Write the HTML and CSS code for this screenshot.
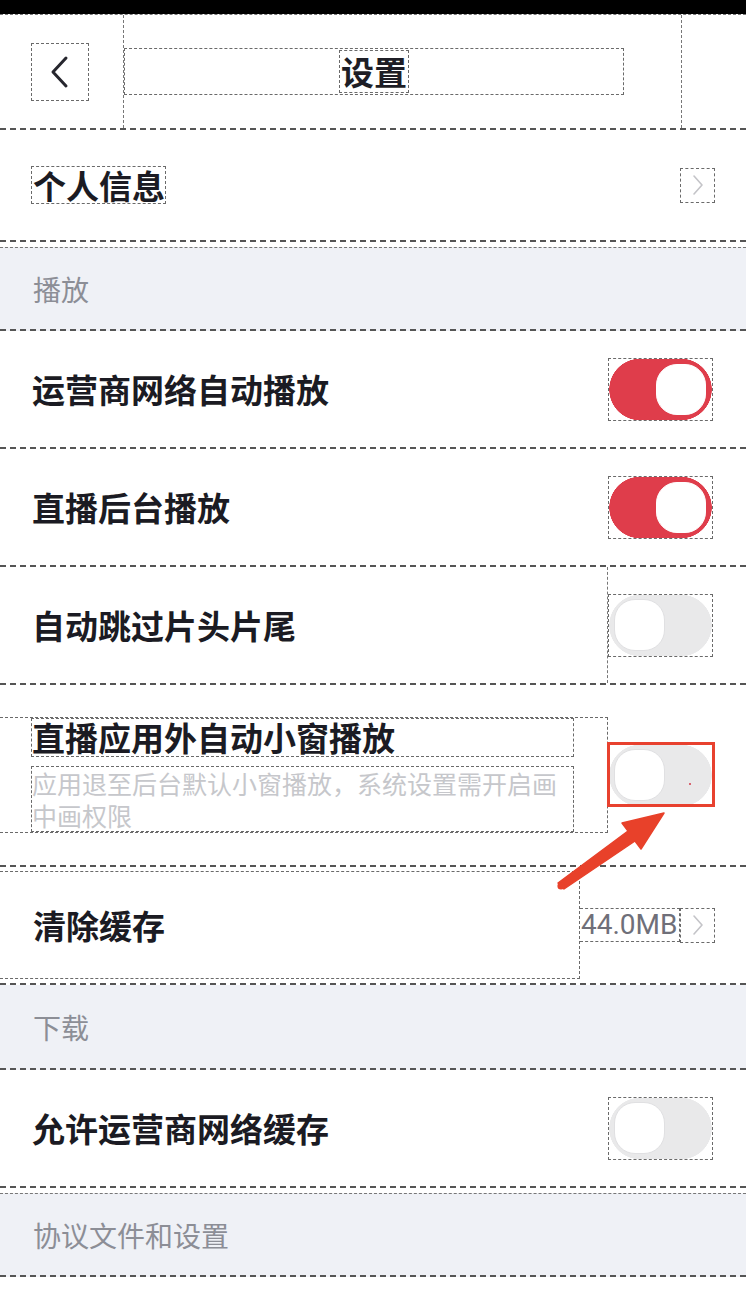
FILE: index.html
```html
<!DOCTYPE html>
<html lang="zh-CN">
<head>
<meta charset="utf-8">
<title>设置</title>
<link rel="stylesheet" href="styles.css">
</head>
<body>
<div class="page">
  <div class="status"></div>
  <header class="nav">
    <div class="nav-back dbg">
      <svg width="24" height="34" viewBox="0 0 24 34"><path d="M18 3 L5 17 L18 31" fill="none" stroke="#26262e" stroke-width="3" stroke-linecap="round" stroke-linejoin="round"/></svg>
    </div>
    <div class="nav-mid">
      <div class="nav-title-box dbg"><span class="nav-title dbg">设置</span></div>
    </div>
  </header>

  <div class="row first">
    <span class="label dbg">个人信息</span>
    <span class="chev dbg"><svg width="12" height="22" viewBox="0 0 12 22"><path d="M2 2 L10 11 L2 20" fill="none" stroke="#c4c4c8" stroke-width="1.6" stroke-linecap="round" stroke-linejoin="round"/></svg></span>
  </div>

  <div class="section gap"><span class="section-text">播放</span></div>

  <div class="row">
    <span class="label">运营商网络自动播放</span>
    <div class="toggle on dbg"><span class="knob"></span></div>
  </div>

  <div class="row">
    <span class="label">直播后台播放</span>
    <div class="toggle on dbg"><span class="knob"></span></div>
  </div>

  <div class="row">
    <span class="label">自动跳过片头片尾</span>
    <div class="toggle-col"><div class="toggle dbg"><span class="knob"></span></div></div>
  </div>

  <div class="row tall">
    <div class="text-block dbg">
      <div class="label-line dbg">直播应用外自动小窗播放</div>
      <div class="desc dbg">应用退至后台默认小窗播放，系统设置需开启画中画权限</div>
    </div>
    <div class="toggle dbg highlight"><span class="knob"></span><span class="dot"></span><span class="mark"></span></div>
  </div>

  <div class="row cache">
    <div class="cache-left dbg"><span class="label">清除缓存</span></div>
    <div class="cache-right">
      <span class="size dbg">44.0MB</span>
      <span class="chev dbg"><svg width="12" height="22" viewBox="0 0 12 22"><path d="M2 2 L10 11 L2 20" fill="none" stroke="#c4c4c8" stroke-width="1.6" stroke-linecap="round" stroke-linejoin="round"/></svg></span>
    </div>
  </div>

  <div class="section"><span class="section-text">下载</span></div>

  <div class="row">
    <span class="label">允许运营商网络缓存</span>
    <div class="toggle dbg"><span class="knob"></span></div>
  </div>

  <div class="section gap"><span class="section-text">协议文件和设置</span></div>

  <svg class="arrow" width="746" height="1290" viewBox="0 0 746 1290">
    <polygon points="664,813 641,849 635,841 564,889 558,883 628,831 622,823" fill="#e8412a" stroke="#e8412a" stroke-width="1.5" stroke-linejoin="round"/>
    <circle cx="561" cy="886" r="3.6" fill="#e8412a"/>
  </svg>
</div>
</body>
</html>
```

FILE: styles.css
```css
* { box-sizing: border-box; }
html, body { margin: 0; padding: 0; background: #ffffff; }
body {
  font-family: "Noto Sans CJK SC", "Noto Sans", sans-serif;
  color: #1b1b23;
}
.page {
  position: relative;
  width: 746px;
  height: 1290px;
  overflow: hidden;
  background: #fff;
}
.dbg { border: 1px dashed #6a6a6a; }

.status {
  height: 14px;
  background: #000;
}

.nav {
  height: 116px;
  display: flex;
  align-items: center;
  border-top: 1px dashed #777;
  border-bottom: 2px dashed #555;
}
.nav-back {
  width: 58px;
  height: 58px;
  margin-left: 31px;
  margin-right: 34px;
  display: flex;
  align-items: center;
  justify-content: center;
}
.nav-mid {
  width: 559px;
  align-self: stretch;
  border-left: 1px dashed #777;
  border-right: 1px dashed #777;
  display: flex;
  align-items: center;
}
.nav-title-box {
  width: 500px;
  height: 47px;
  display: flex;
  align-items: center;
  justify-content: center;
}
.nav-title {
  font-size: 33px;
  font-weight: 700;
  line-height: 41px;
  padding: 0 1px;
  color: #1e1e26;
}

.row {
  height: 118px;
  display: flex;
  align-items: center;
  justify-content: space-between;
  padding: 0 31px 0 31px;
  border-bottom: 2px dashed #555;
}
.row.first { height: 112px; }
.label {
  font-size: 33px;
  font-weight: 700;
  line-height: 36px;
  color: #1b1b23;
  padding-left: 1px;
}
.chev {
  width: 35px;
  height: 35px;
  display: flex;
  align-items: center;
  justify-content: center;
}

.section {
  height: 85px;
  background: #eff1f6;
  display: flex;
  align-items: center;
  padding-left: 33px;
  border-bottom: 2px dashed #555;
}
.section.gap {
  height: 84px;
  margin-top: 5px;
  border-top: 1px dashed #777;
}
.section-text {
  font-size: 28px;
  color: #8c8e96;
  line-height: 36px;
}

.toggle {
  position: relative;
  width: 105px;
  height: 63px;
  display: flex;
  align-items: center;
  margin-right: 2px;
  background:
    radial-gradient(circle at 31px 50%, #e9e9ea 30.5px, transparent 31px) left / 62px 100% no-repeat,
    radial-gradient(circle at 31px 50%, #e9e9ea 30.5px, transparent 31px) right / 62px 100% no-repeat,
    linear-gradient(#e9e9ea, #e9e9ea) center / 44px 100% no-repeat;
  padding: 0 5px;
}
.toggle.on {
  justify-content: flex-end;
  background:
    radial-gradient(circle at 31px 50%, #df3d4b 30.5px, transparent 31px) left / 62px 100% no-repeat,
    radial-gradient(circle at 31px 50%, #df3d4b 30.5px, transparent 31px) right / 62px 100% no-repeat,
    linear-gradient(#df3d4b, #df3d4b) center / 44px 100% no-repeat;
  padding: 0 6px;
}
.knob {
  width: 51px;
  height: 52px;
  border-radius: 21px;
  background: #fff;
  border: 1px solid #e0e0e2;
}
.toggle.on .knob { border-color: #fff; width: 50px; height: 51px; }

.toggle-col {
  align-self: stretch;
  display: flex;
  align-items: center;
  border-left: 1px dashed #777;
}

.row.tall {
  height: 182px;
  padding-left: 0;
}
.text-block {
  width: 608px;
  padding: 0 33px 0 31px;
  display: flex;
  flex-direction: column;
  gap: 9px;
  border-left: none;
}
.label-line {
  font-size: 33px;
  font-weight: 700;
  line-height: 37px;
  color: #1b1b23;
}
.desc {
  font-size: 25px;
  line-height: 32px;
  color: #c6c7cb;
}
.mark {
  position: absolute;
  left: -2px;
  top: -3px;
  width: 108px;
  height: 65px;
  border: 3px solid #e8412f;
}
.dot {
  position: absolute;
  left: 80px;
  top: 38px;
  width: 2px;
  height: 2px;
  background: #d23a4a;
  border-radius: 1px;
}

.row.cache {
  padding-left: 0;
  padding-right: 31px;
  justify-content: flex-start;
}
.cache-left {
  width: 581px;
  height: 108px;
  display: flex;
  align-items: center;
  padding-left: 32px;
  border-left: none;
}
.cache-right {
  display: flex;
  align-items: center;
}
.size {
  font-family: Roboto, "Noto Sans", sans-serif;
  font-size: 28px;
  line-height: 32px;
  color: #6f6f79;
  min-width: 100px;
  padding: 0 1px;
  text-align: left;
  border-left: none;
  white-space: nowrap;
}

.arrow {
  position: absolute;
  left: 0;
  top: 0;
  pointer-events: none;
}
```
